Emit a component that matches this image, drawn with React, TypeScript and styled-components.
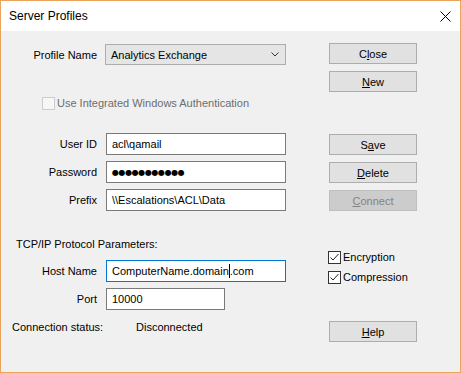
import React from "react";
import styled, { createGlobalStyle } from "styled-components";

const GlobalStyle = createGlobalStyle`
  html, body {
    margin: 0;
    padding: 0;
    background: #ffffff;
  }
  body {
    font-family: "Liberation Sans", Arial, sans-serif;
    font-size: 11px;
    color: #000000;
  }
`;

const Window = styled.div`
  width: 461px;
  height: 373px;
  box-sizing: border-box;
  border: 1px solid #e9a55c;
  background: #f0f0f0;
  display: flex;
  flex-direction: column;
`;

const TitleBar = styled.div`
  height: 30px;
  flex: none;
  background: #ffffff;
  display: flex;
  align-items: center;
  justify-content: space-between;
  padding: 0 9px 0 8px;
  font-size: 12px;
  color: #000;
`;

const CloseGlyph = styled.svg`
  width: 11px;
  height: 11px;
  margin-top: 1px;
`;

const Body = styled.div`
  flex: 1;
  display: flex;
`;

const LeftColumn = styled.div`
  width: 328px;
  padding-top: 13px;
  display: flex;
  flex-direction: column;
`;

const RightColumn = styled.div`
  padding-top: 12px;
  display: flex;
  flex-direction: column;
  width: 88px;
`;

const Stack = styled.div<{ $top?: number; $gap?: number }>`
  display: flex;
  flex-direction: column;
  margin-top: ${(p) => p.$top ?? 0}px;
  gap: ${(p) => p.$gap ?? 6}px;
`;

const FormRow = styled.div`
  display: grid;
  grid-template-columns: 96px auto;
  column-gap: 8px;
  align-items: center;
`;

const Label = styled.span`
  text-align: right;
  line-height: 14px;
`;

const Combo = styled.div`
  width: 181px;
  height: 21px;
  box-sizing: border-box;
  border: 1px solid #adadad;
  background: #e5e5e5;
  display: flex;
  align-items: center;
  justify-content: space-between;
  padding: 0 6px 0 5px;
`;

const TextBox = styled.div<{ $width?: number; $focused?: boolean }>`
  width: ${(p) => p.$width ?? 180}px;
  height: 22px;
  margin-left: 1px;
  box-sizing: border-box;
  border: 1px solid ${(p) => (p.$focused ? "#0078d7" : "#7a7a7a")};
  background: #ffffff;
  display: flex;
  align-items: center;
  padding-left: 5px;
  white-space: pre;
`;

const Dots = styled.span`
  font-family: "DejaVu Sans", sans-serif;
  font-size: 8px;
  letter-spacing: -0.4px;
  margin-top: 1px;
`;

const Caret = styled.span`
  display: inline-block;
  width: 1px;
  height: 14px;
  background: #000;
  vertical-align: middle;
`;

const CheckRow = styled.label<{ $indent?: number; $top?: number; $disabled?: boolean }>`
  display: flex;
  align-items: center;
  gap: 2px;
  height: 13px;
  padding-left: ${(p) => p.$indent ?? 0}px;
  margin-top: ${(p) => p.$top ?? 0}px;
  color: ${(p) => (p.$disabled ? "#6d6d6d" : "#000")};
  line-height: 13px;
`;

const Box = styled.span<{ $disabled?: boolean }>`
  width: 13px;
  height: 13px;
  box-sizing: border-box;
  flex: none;
  border: 1px solid ${(p) => (p.$disabled ? "#cccccc" : "#333333")};
  background: ${(p) => (p.$disabled ? "#f7f7f7" : "#ffffff")};
  display: flex;
  align-items: center;
  justify-content: center;
`;

const SectionLabel = styled.div`
  margin-top: 26px;
  padding-left: 15px;
  line-height: 14px;
`;

const StatusRow = styled.div`
  margin-top: 10px;
  padding-left: 11px;
  display: grid;
  grid-template-columns: 124px auto;
  line-height: 14px;
`;

const Button = styled.div<{ $disabled?: boolean }>`
  width: 88px;
  height: 21px;
  box-sizing: border-box;
  border: 1px solid ${(p) => (p.$disabled ? "#bfbfbf" : "#adadad")};
  background: ${(p) => (p.$disabled ? "#cccccc" : "#e1e1e1")};
  color: ${(p) => (p.$disabled ? "#838383" : "#000")};
  display: flex;
  align-items: center;
  justify-content: center;
`;

const ButtonGroup = styled.div<{ $top?: number }>`
  display: flex;
  flex-direction: column;
  gap: 7px;
  margin-top: ${(p) => p.$top ?? 0}px;
`;

const CheckGroup = styled.div<{ $top?: number }>`
  display: flex;
  flex-direction: column;
  gap: 7px;
  margin-left: -1px;
  width: 120px;
  margin-top: ${(p) => p.$top ?? 0}px;
`;

const Check = () => (
  <svg width="11" height="11" viewBox="0 0 11 11">
    <path d="M1.5 5.5 L4 8 L9.5 2" fill="none" stroke="#222" strokeWidth="1" />
  </svg>
);

const Chevron = () => (
  <svg width="8" height="5" viewBox="0 0 8 5">
    <path d="M0.5 0.5 L4 4 L7.5 0.5" fill="none" stroke="#333" strokeWidth="1" />
  </svg>
);

export default function App() {
  return (
    <>
      <GlobalStyle />
      <Window>
        <TitleBar>
          <span>Server Profiles</span>
          <CloseGlyph viewBox="0 0 11 11">
            <path d="M0.5 0.5 L10.5 10.5 M10.5 0.5 L0.5 10.5" stroke="#000" strokeWidth="1" />
          </CloseGlyph>
        </TitleBar>
        <Body>
          <LeftColumn>
            <FormRow>
              <Label>Profile Name</Label>
              <Combo>
                <span>Analytics Exchange</span>
                <Chevron />
              </Combo>
            </FormRow>

            <CheckRow $indent={41} $top={32} $disabled>
              <Box $disabled />
              <span>Use Integrated Windows Authentication</span>
            </CheckRow>

            <Stack $top={23}>
              <FormRow>
                <Label>User ID</Label>
                <TextBox>acl\qamail</TextBox>
              </FormRow>
              <FormRow>
                <Label>Password</Label>
                <TextBox>
                  <Dots>●●●●●●●●●●●</Dots>
                </TextBox>
              </FormRow>
              <FormRow>
                <Label>Prefix</Label>
                <TextBox>\\Escalations\ACL\Data</TextBox>
              </FormRow>
            </Stack>

            <SectionLabel>TCP/IP Protocol Parameters:</SectionLabel>

            <Stack $top={9}>
              <FormRow>
                <Label>Host Name</Label>
                <TextBox $focused>
                  ComputerName.domain<Caret />.com
                </TextBox>
              </FormRow>
              <FormRow>
                <Label>Port</Label>
                <TextBox $width={119}>10000</TextBox>
              </FormRow>
            </Stack>

            <StatusRow>
              <span>Connection status:</span>
              <span>Disconnected</span>
            </StatusRow>
          </LeftColumn>

          <RightColumn>
            <ButtonGroup>
              <Button>
                C<u>l</u>ose
              </Button>
              <Button>
                <u>N</u>ew
              </Button>
            </ButtonGroup>
            <ButtonGroup $top={42}>
              <Button>
                S<u>a</u>ve
              </Button>
              <Button>
                <u>D</u>elete
              </Button>
              <Button $disabled>
                <u>C</u>onnect
              </Button>
            </ButtonGroup>
            <CheckGroup $top={40}>
              <CheckRow>
                <Box>
                  <Check />
                </Box>
                <span>Encryption</span>
              </CheckRow>
              <CheckRow>
                <Box>
                  <Check />
                </Box>
                <span>Compression</span>
              </CheckRow>
            </CheckGroup>
            <ButtonGroup $top={37}>
              <Button>
                <u>H</u>elp
              </Button>
            </ButtonGroup>
          </RightColumn>
        </Body>
      </Window>
    </>
  );
}
